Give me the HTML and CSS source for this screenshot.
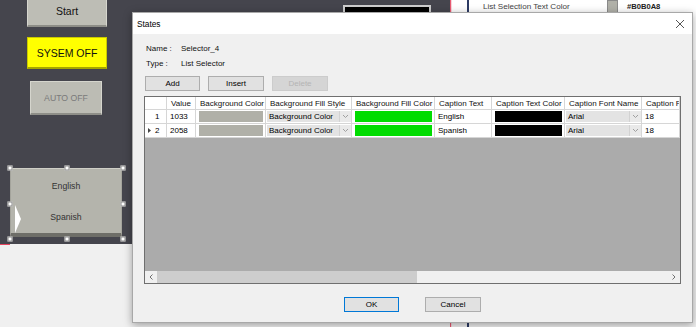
FILE: index.html
```html
<!DOCTYPE html>
<html>
<head>
<meta charset="utf-8">
<title>States</title>
<link rel="stylesheet" href="styles.css">
</head>
<body>
<div class="workspace">
  <div class="stage">
    <div class="canvas">
      <div class="wgt btn-start">Start</div>
      <div class="wgt btn-sys">SYSEM OFF</div>
      <div class="wgt btn-auto">AUTO OFF</div>
      <div class="wgt list-sel">
        <div class="ls-item">English</div>
        <div class="ls-item">Spanish</div>
        <span class="ls-arrow"></span>
      </div>
      <div class="selection">
        <span class="hdl tl"></span><span class="hdl tc"></span><span class="hdl tr"></span>
        <span class="hdl ml"></span><span class="hdl mr"></span>
        <span class="hdl bl"></span><span class="hdl bc"></span><span class="hdl br"></span>
      </div>
      <div class="wgt blackbox"></div>
    </div>
    <div class="below"><span class="red-mark"></span></div>
  </div>
  <div class="stage-edge"></div>
  <div class="gutter"></div>
  <div class="props">
    <div class="prop-row">
      <span class="prop-name">List Selection Text Color</span>
      <span class="swatch"></span>
      <span class="prop-val">#B0B0A8</span>
    </div>
  </div>
</div>

<div class="dialog">
  <div class="titlebar">
    <span class="title">States</span>
    <svg class="close" width="10" height="10" viewBox="0 0 10 10"><path d="M1 1L9 9M9 1L1 9" stroke="#555" stroke-width="1" fill="none"/></svg>
  </div>
  <div class="dlg-body">
    <div class="info"><span class="lbl">Name :</span><span>Selector_4</span></div>
    <div class="info"><span class="lbl">Type :</span><span>List Selector</span></div>
    <div class="toolbar">
      <button class="btn w55">Add</button>
      <button class="btn w56">Insert</button>
      <button class="btn w56 disabled">Delete</button>
    </div>
    <div class="grid">
      <div class="row head">
        <div class="cell"></div>
        <div class="cell">Value</div>
        <div class="cell">Background Color</div>
        <div class="cell">Background Fill Style</div>
        <div class="cell">Background Fill Color</div>
        <div class="cell">Caption Text</div>
        <div class="cell">Caption Text Color</div>
        <div class="cell">Caption Font Name</div>
        <div class="cell">Caption Font Size</div>
      </div>
      <div class="row data">
        <div class="cell rh"><span class="tri hidden"></span><span>1</span></div>
        <div class="cell">1033</div>
        <div class="cell sw-cell"><span class="sw gray"></span></div>
        <div class="cell combo-cell"><span class="combo"><span class="combo-text">Background Color</span><span class="combo-btn"><svg width="5" height="3" viewBox="0 0 5 3"><path d="M0 0L2.5 2.5L5 0" fill="none" stroke="#a0a0a0"/></svg></span></span></div>
        <div class="cell sw-cell"><span class="sw green"></span></div>
        <div class="cell">English</div>
        <div class="cell sw-cell"><span class="sw black"></span></div>
        <div class="cell combo-cell"><span class="combo"><span class="combo-text">Arial</span><span class="combo-btn"><svg width="5" height="3" viewBox="0 0 5 3"><path d="M0 0L2.5 2.5L5 0" fill="none" stroke="#a0a0a0"/></svg></span></span></div>
        <div class="cell">18</div>
      </div>
      <div class="row data">
        <div class="cell rh"><span class="tri"></span><span>2</span></div>
        <div class="cell">2058</div>
        <div class="cell sw-cell"><span class="sw gray"></span></div>
        <div class="cell combo-cell"><span class="combo"><span class="combo-text">Background Color</span><span class="combo-btn"><svg width="5" height="3" viewBox="0 0 5 3"><path d="M0 0L2.5 2.5L5 0" fill="none" stroke="#a0a0a0"/></svg></span></span></div>
        <div class="cell sw-cell"><span class="sw green"></span></div>
        <div class="cell">Spanish</div>
        <div class="cell sw-cell"><span class="sw black"></span></div>
        <div class="cell combo-cell"><span class="combo"><span class="combo-text">Arial</span><span class="combo-btn"><svg width="5" height="3" viewBox="0 0 5 3"><path d="M0 0L2.5 2.5L5 0" fill="none" stroke="#a0a0a0"/></svg></span></span></div>
        <div class="cell">18</div>
      </div>
      <div class="grid-empty"></div>
      <div class="hscroll">
        <span class="sarr"><svg width="4" height="6" viewBox="0 0 4 6"><path d="M3.5 0.5L1 3L3.5 5.5" fill="none" stroke="#707070"/></svg></span>
        <div class="track"><div class="thumb"></div></div>
        <span class="sarr"><svg width="4" height="6" viewBox="0 0 4 6"><path d="M0.5 0.5L3 3L0.5 5.5" fill="none" stroke="#707070"/></svg></span>
      </div>
    </div>
    <div class="footer">
      <button class="btn w55 ok">OK</button>
      <button class="btn w56">Cancel</button>
    </div>
  </div>
</div>
</body>
</html>
```

FILE: styles.css
```css
* { box-sizing: border-box; }
html, body { margin: 0; padding: 0; }
body {
  width: 696px;
  height: 327px;
  overflow: hidden;
  position: relative;
  background: #f0f0f0;
  font-family: "Liberation Sans", Arial, sans-serif;
  font-size: 8px;
  color: #000;
}

/* ---------- background workspace ---------- */
.workspace { display: flex; height: 327px; }
.stage { width: 450px; display: flex; flex-direction: column; }
.canvas { height: 244px; background: #45454d; position: relative; overflow: hidden; }
.below { flex: 1; position: relative; background: #f0f0f0; }
.red-mark { position: absolute; left: 0; top: 0; width: 10px; height: 1px; background: #e8455f; }
.stage-edge { width: 2px; background: linear-gradient(90deg, #e85a72 0 1px, #f6d6dc 1px); }
.gutter { width: 15px; background: linear-gradient(#ffffff 0 60px, #f0f0f0 60px); }
.props { flex: 1; border-left: 2px solid #2d3b64; background: linear-gradient(#ffffff 0 60px, #f0f0f0 60px); }
.prop-row { display: flex; align-items: center; height: 13px; padding-left: 14px; color: #444; font-size: 8.1px; }
.prop-name { width: 124px; white-space: nowrap; }
.swatch { width: 11px; height: 13px; border: 1px solid #8a8a8a; background: #b0b0a8; }
.prop-val { margin-left: 9px; font-weight: bold; font-size: 7.6px; color: #222; }

/* canvas widgets (free canvas) */
.wgt {
  position: absolute;
  display: flex;
  align-items: center;
  justify-content: center;
  font-size: 10.5px;
  color: #111;
}
.btn-start {
  left: 27px; top: -4px; width: 80px; height: 31px;
  background: #bdbdb5;
  border: 1px solid #d6d6ce;
  border-bottom: 2px solid #8d8d87;
}
.btn-sys {
  left: 27px; top: 37px; width: 80px; height: 32px;
  background: #ffff00;
  border: 1px solid #c9c900;
  border-bottom: 2px solid #a6a600;
}
.btn-auto {
  left: 30px; top: 81px; width: 72px; height: 34px;
  background: #bcbcb4;
  border: 1px solid #d5d5cd;
  border-bottom: 2px solid #8e8e88;
  font-size: 8.7px;
  color: #7a7a7a;
}
.list-sel {
  left: 10px; top: 168px; width: 112px; height: 69px;
  background: #b4b4ac;
  border: 1px solid #a4a49c;
  border-top-color: #cfcfc7;
  border-bottom: 4px solid #6e6e68;
  display: grid;
  grid-template-rows: 30px 1fr;
  padding-top: 2px;
  font-size: 8.7px;
  color: #333;
}
.ls-item { display: flex; align-items: center; justify-content: center; }
.ls-arrow {
  position: absolute; left: 4px; top: 36px; width: 6px; height: 28px;
  background: #ffffff;
  clip-path: polygon(0 0, 100% 50%, 0 100%);
}
.selection { position: absolute; left: 10px; top: 168px; width: 113px; height: 71px; }
.hdl {
  position: absolute; width: 5px; height: 5px;
  background: #fff; border: 1px solid #8a8a8a;
  transform: translate(-50%, -50%);
}
.tl { left: 0; top: 0; } .tc { left: 50%; top: 0; } .tr { left: 100%; top: 0; }
.ml { left: 0; top: 50%; } .mr { left: 100%; top: 50%; }
.bl { left: 0; top: 100%; } .bc { left: 50%; top: 100%; } .br { left: 100%; top: 100%; }
.blackbox { left: 343px; top: 5px; width: 88px; height: 14px; background: #000; border: 2px solid #cdcdcd; }

/* ---------- dialog ---------- */
.dialog {
  position: absolute;
  left: 132px; top: 12px;
  width: 561px; height: 311px;
  background: #f0f0f0;
  border: 1px solid #a8a8a8;
  box-shadow: 0 2px 8px rgba(0, 0, 0, 0.35);
  display: flex;
  flex-direction: column;
}
.titlebar {
  height: 21px;
  background: #fff;
  display: flex;
  align-items: center;
  justify-content: space-between;
  padding: 0 7px 0 4px;
}
.title { font-size: 8.3px; color: #000; }
.dlg-body { flex: 1; display: flex; flex-direction: column; padding: 7px 11px 0 11px; }
.info { height: 15px; display: flex; align-items: center; padding-left: 2px; color: #111; }
.lbl { width: 35px; }
.toolbar { margin-top: 5px; display: flex; gap: 8px; padding-left: 1px; }

.btn {
  height: 15px;
  padding: 0;
  background: #e1e1e1;
  border: 1px solid #adadad;
  font-family: inherit;
  font-size: 8px;
  color: #000;
}
.w55 { width: 55px; }
.w56 { width: 56px; }
.btn.disabled { background: #d5d5d5; border-color: #cccccc; color: #b4b4b4; }
.btn.ok { border-color: #0078d7; }

/* data grid */
.grid {
  margin-top: 5px;
  height: 188px;
  border: 1px solid #6f6f6f;
  background: #ababab;
  display: flex;
  flex-direction: column;
  overflow: hidden;
}
.row {
  display: grid;
  grid-template-columns: 22px 29px 70px 86px 83px 57px 73px 77px 1fr;
  background: #fff;
}
.row.head { height: 13px; }
.row.data { height: 14px; }
.cell {
  border-right: 1px solid #d6d6d6;
  border-bottom: 1px solid #d6d6d6;
  white-space: nowrap;
  overflow: hidden;
  display: flex;
  align-items: center;
  padding-left: 3px;
}
.head .cell { padding-left: 4px; color: #111; }
.cell.rh { padding-left: 3px; gap: 4px; }
.tri {
  width: 3px; height: 5px; background: #444;
  clip-path: polygon(0 0, 100% 50%, 0 100%);
}
.tri.hidden { visibility: hidden; }
.sw-cell { padding: 1px 2px 1px 3px; align-items: stretch; }
.sw { flex: 1; }
.sw.gray { background: #b0b0a8; }
.sw.green { background: #00dc00; }
.sw.black { background: #000; }
.combo-cell { padding: 1px 0 1px 1px; align-items: stretch; }
.combo { flex: 1; display: flex; background: #e3e3e3; }
.combo-text { flex: 1; display: flex; align-items: center; padding-left: 2px; overflow: hidden; }
.combo-btn {
  width: 12px;
  display: flex; align-items: center; justify-content: center;
  background: #e9e9e9;
  border-left: 1px solid #d2d2d2;
}
.grid-empty { flex: 1; background: #ababab; }
.hscroll { height: 12px; display: flex; background: #f0f0f0; }
.sarr { width: 12px; display: flex; align-items: center; justify-content: center; }
.track { flex: 1; display: flex; }
.thumb { width: 260px; background: #cdcdcd; }

.footer { margin-top: 13px; display: flex; justify-content: center; gap: 26px; }
```
